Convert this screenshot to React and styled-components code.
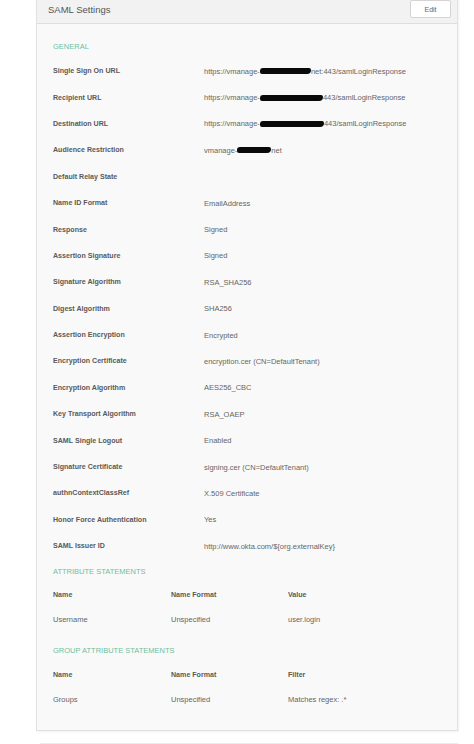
import React from "react";
import styled, { createGlobalStyle } from "styled-components";

const GlobalStyle = createGlobalStyle`
  html, body {
    margin: 0;
    padding: 0;
    background: #ffffff;
    font-family: "Liberation Sans", Arial, sans-serif;
    overflow: hidden;
  }
`;

const general = [
  ["Single Sign On URL", "url", { blob: 51, rest: "net:443/samlLoginResponse" }],
  ["Recipient URL", "url", { blob: 63, rest: "443/samlLoginResponse" }],
  ["Destination URL", "url", { blob: 64, rest: "443/samlLoginResponse" }],
  ["Audience Restriction", "aud", { blob: 34, rest: "net" }],
  ["Default Relay State", ""],
  ["Name ID Format", "EmailAddress"],
  ["Response", "Signed"],
  ["Assertion Signature", "Signed"],
  ["Signature Algorithm", "RSA_SHA256"],
  ["Digest Algorithm", "SHA256"],
  ["Assertion Encryption", "Encrypted"],
  ["Encryption Certificate", "encryption.cer (CN=DefaultTenant)"],
  ["Encryption Algorithm", "AES256_CBC"],
  ["Key Transport Algorithm", "RSA_OAEP"],
  ["SAML Single Logout", "Enabled"],
  ["Signature Certificate", "signing.cer (CN=DefaultTenant)"],
  ["authnContextClassRef", "X.509 Certificate"],
  ["Honor Force Authentication", "Yes"],
  ["SAML Issuer ID", "http://www.okta.com/${org.externalKey}"],
];

const renderValue = (kind, extra) => {
  if (kind === "url") {
    return (
      <>
        https://vmanage-<Redacted $w={extra.blob} />
        {extra.rest}
      </>
    );
  }
  if (kind === "aud") {
    return (
      <>
        vmanage-<Redacted $w={extra.blob} />
        {extra.rest}
      </>
    );
  }
  return kind;
};

const App = () => {
  return (
    <>
      <GlobalStyle />
      <Page>
        <Card>
          <Header>
            <Title>SAML Settings</Title>
            <EditButton>Edit</EditButton>
          </Header>
          <Body>
            <SectionTitle>GENERAL</SectionTitle>
            {general.map(([label, kind, extra]) => (
              <Row key={label}>
                <Label>{label}</Label>
                <Value>{renderValue(kind, extra)}</Value>
              </Row>
            ))}

            <SectionTitle>ATTRIBUTE STATEMENTS</SectionTitle>
            <TableRow>
              <HeadCell>Name</HeadCell>
              <HeadCell>Name Format</HeadCell>
              <HeadCell>Value</HeadCell>
            </TableRow>
            <TableRow>
              <Cell>Username</Cell>
              <Cell>Unspecified</Cell>
              <Cell>user.login</Cell>
            </TableRow>

            <SectionTitle $spaced>GROUP ATTRIBUTE STATEMENTS</SectionTitle>
            <TableRow>
              <HeadCell>Name</HeadCell>
              <HeadCell>Name Format</HeadCell>
              <HeadCell>Filter</HeadCell>
            </TableRow>
            <TableRow>
              <Cell>Groups</Cell>
              <Cell>Unspecified</Cell>
              <Cell>Matches regex: .*</Cell>
            </TableRow>
          </Body>
        </Card>
        <NextCard />
      </Page>
    </>
  );
};

const Page = styled.div`
  padding-left: 36px;
  width: 422px;
  margin-top: -6px;
`;

const Card = styled.div`
  border: 1px solid #e2e2e2;
  background: #f9f9f9;
  box-shadow: 1px 1px 2px rgba(0, 0, 0, 0.06);
`;

const Header = styled.div`
  height: 28px;
  display: flex;
  align-items: center;
  justify-content: space-between;
  padding: 0 6px 0 11px;
  background: #f2f2f2;
  border-bottom: 1px solid #dedede;
`;

const Title = styled.div`
  font-size: 9.5px;
  color: #555;
`;

const EditButton = styled.button`
  width: 41px;
  height: 18px;
  background: #ffffff;
  border: 1px solid #d4d4d4;
  border-radius: 2px;
  font-family: "Liberation Sans", Arial, sans-serif;
  font-size: 7px;
  color: #666;
  padding: 0;
`;

const Body = styled.div`
  padding: 10px 16px 19px 16px;
`;

const SectionTitle = styled.div`
  height: ${(p) => (p.$spaced ? "26px" : "24px")};
  margin-top: ${(p) => (p.$spaced ? "6px" : "0")};
  display: flex;
  align-items: center;
  font-size: 7.5px;
  color: #6dbf9f;
`;

const Row = styled.div`
  height: 26.4px;
  display: grid;
  grid-template-columns: 151px 1fr;
  align-items: center;
`;

const Label = styled.div`
  font-size: 7.1px;
  font-weight: bold;
  color: #5a5a5a;
`;

const Value = styled.div`
  font-size: 7.5px;
  color: #666;
  white-space: nowrap;
  display: flex;
  align-items: center;
`;

const Redacted = styled.span`
  display: inline-block;
  width: ${(p) => p.$w}px;
  height: 6px;
  background: #0a0a0a;
  border-radius: 3px 2px 4px 2px;
`;

const TableRow = styled.div`
  height: 24px;
  display: grid;
  grid-template-columns: 118px 117px 1fr;
  align-items: center;
`;

const HeadCell = styled.div`
  font-size: 7.1px;
  font-weight: bold;
  color: #5a5a5a;
`;

const Cell = styled.div`
  font-size: 7.5px;
  color: #666;
`;

const NextCard = styled.div`
  margin-top: 12px;
  margin-left: 4px;
  height: 20px;
  border-top: 1px solid #ececec;
`;

export default App;
